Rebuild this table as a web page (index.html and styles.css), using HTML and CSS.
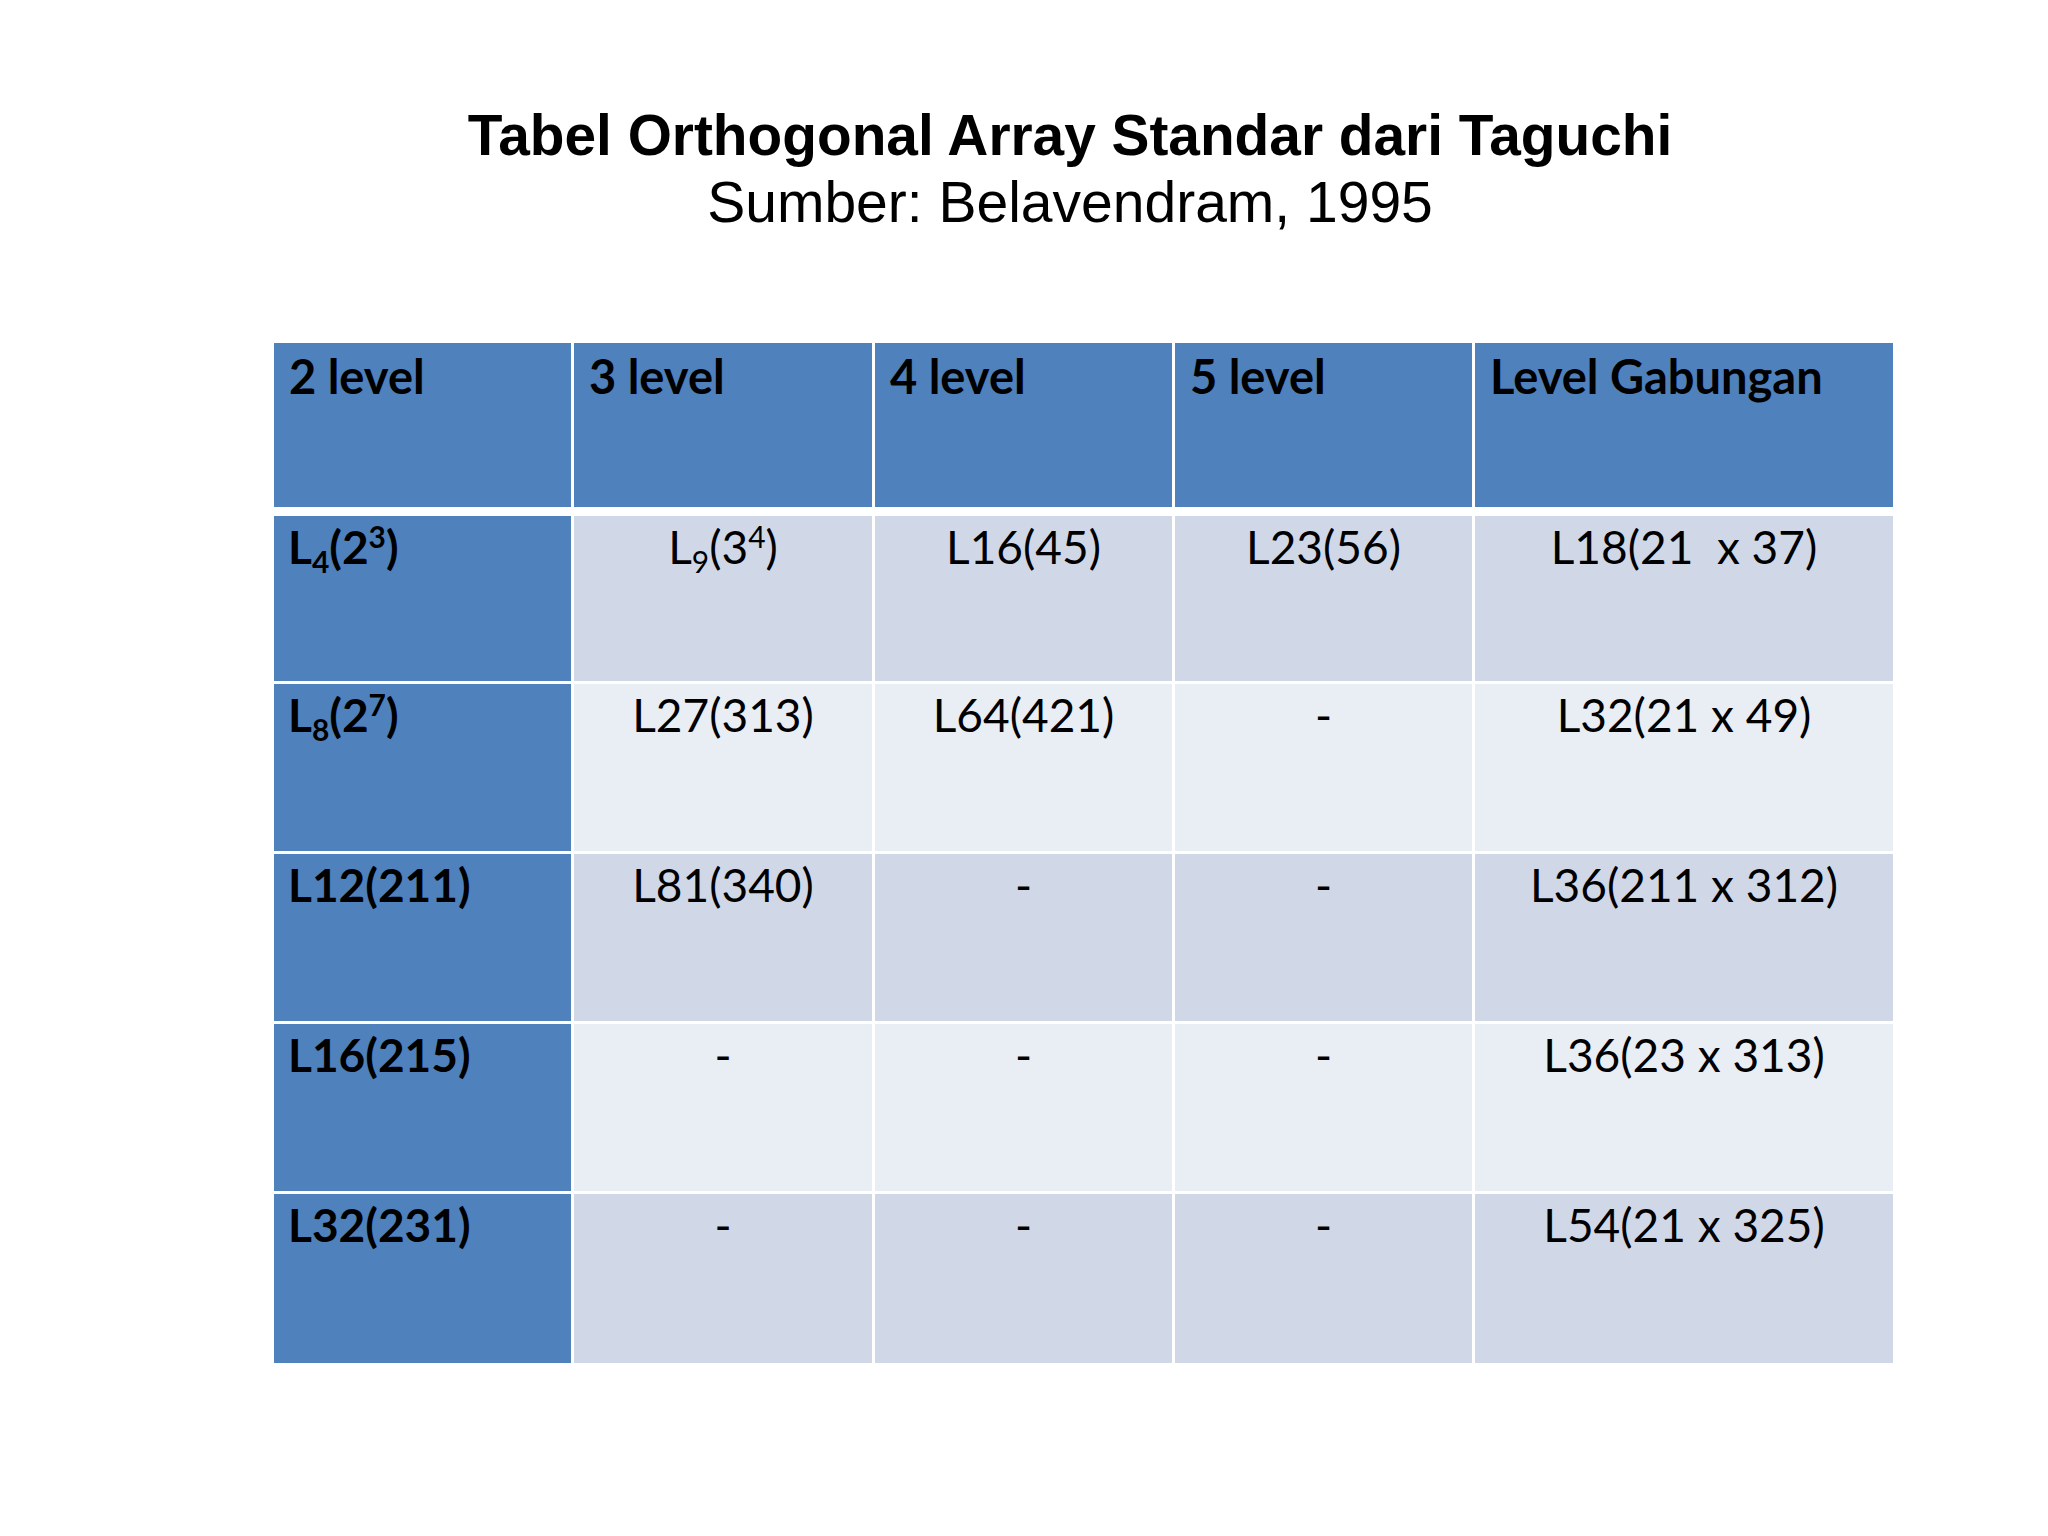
FILE: index.html
```html
<!DOCTYPE html>
<html lang="id">
<head>
<meta charset="utf-8">
<title>Tabel Orthogonal Array Standar dari Taguchi</title>
<link rel="stylesheet" href="styles.css">
</head>
<body>
<div class="slide">
  <header class="heading">
    <h1 class="title">Tabel Orthogonal Array Standar dari Taguchi</h1>
    <p class="subtitle">Sumber: Belavendram, 1995</p>
  </header>
  <div class="grid">
    <div class="cell head">2 level</div>
    <div class="cell head">3 level</div>
    <div class="cell head">4 level</div>
    <div class="cell head">5 level</div>
    <div class="cell head">Level Gabungan</div>

    <div class="cell first">L<span class="sub">4</span>(2<span class="sup">3</span>)</div>
    <div class="cell odd">L<span class="sub">9</span>(3<span class="sup">4</span>)</div>
    <div class="cell odd">L16(45)</div>
    <div class="cell odd">L23(56)</div>
    <div class="cell odd">L18(21&nbsp; x 37)</div>

    <div class="cell first">L<span class="sub">8</span>(2<span class="sup">7</span>)</div>
    <div class="cell even">L27(313)</div>
    <div class="cell even">L64(421)</div>
    <div class="cell even">-</div>
    <div class="cell even">L32(21 x 49)</div>

    <div class="cell first">L12(211)</div>
    <div class="cell odd">L81(340)</div>
    <div class="cell odd">-</div>
    <div class="cell odd">-</div>
    <div class="cell odd">L36(211 x 312)</div>

    <div class="cell first">L16(215)</div>
    <div class="cell even">-</div>
    <div class="cell even">-</div>
    <div class="cell even">-</div>
    <div class="cell even">L36(23 x 313)</div>

    <div class="cell first">L32(231)</div>
    <div class="cell odd">-</div>
    <div class="cell odd">-</div>
    <div class="cell odd">-</div>
    <div class="cell odd">L54(21 x 325)</div>
  </div>
</div>
</body>
</html>
```

FILE: styles.css
```css
html, body {
  margin: 0;
  padding: 0;
  background: #ffffff;
}

.slide {
  width: 2048px;
  height: 1536px;
  box-sizing: border-box;
  padding-top: 102px;
}

.heading {
  margin-left: 92px;
  text-align: center;
  font-family: "Liberation Sans", Arial, sans-serif;
  font-size: 57px;
  line-height: 67px;
  color: #000000;
}

.title {
  margin: 0;
  font-size: 56.8px;
  font-weight: bold;
  line-height: 67px;
}

.subtitle {
  margin: 0;
  font-weight: normal;
}

.grid {
  margin: 107px 0 0 274px;
  width: 1619px;
  display: grid;
  grid-template-columns: 297px 298px 297px 297px 418px;
  grid-template-rows: 170px 165px 167px 167px 167px 169px;
  gap: 3px;
  background: #ffffff;
  font-family: Lato, "Open Sans", sans-serif;
  font-size: 46px;
  line-height: 1.2;
  color: #000000;
}

.cell {
  box-sizing: border-box;
  padding: 3px 14px 0;
  white-space: nowrap;
}

.head {
  background: #4f81bd;
  font-weight: bold;
  font-size: 47px;
  border-bottom: 6px solid #ffffff;
  padding-left: 15px;
  padding-top: 5px;
}

.first {
  background: #4f81bd;
  font-weight: bold;
}

.odd {
  background: #d0d8e8;
  text-align: center;
}

.even {
  background: #e9edf4;
  text-align: center;
}

.sub {
  font-size: 65%;
  vertical-align: -0.28em;
}

.sup {
  font-size: 65%;
  vertical-align: 0.55em;
}
```
